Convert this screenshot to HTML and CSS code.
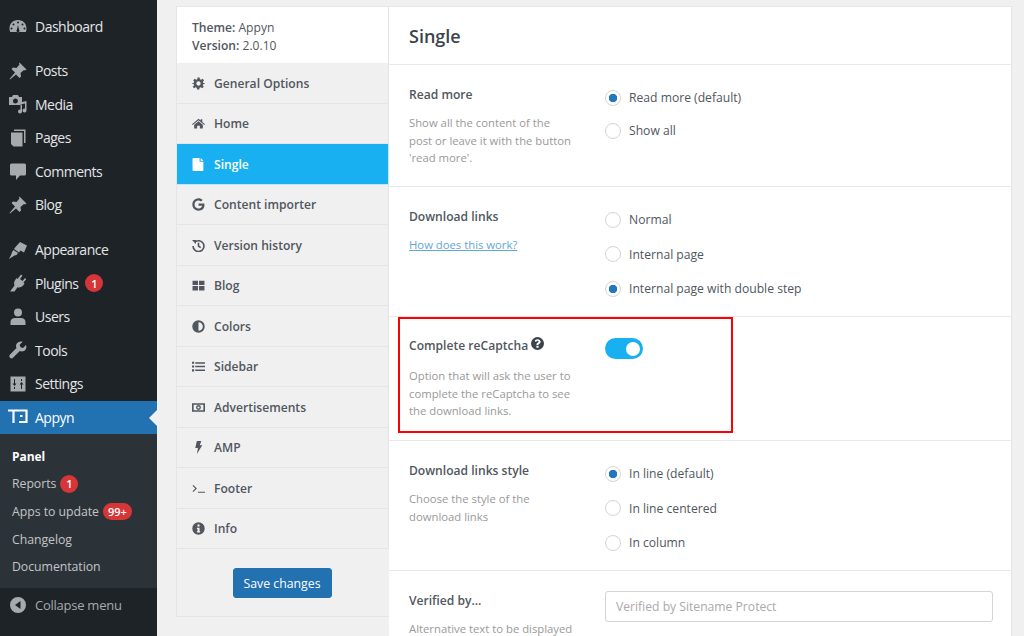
FILE: index.html
```html
<!DOCTYPE html>
<html lang="en">
<head>
<meta charset="utf-8">
<title>Appyn Panel</title>
<link rel="stylesheet" href="styles.css">
</head>
<body>
<div class="page">
<aside class="wp">
  <a class="wi first"><svg class="wic" viewBox="0 0 20 20"><path fill-rule="evenodd" d="M10 3C5 3 1.500 6.500 1.500 11.500c0 1.300.2 2.400.7 3.500h15.600c.5-1.100.7-2.200.7-3.500C18.500 6.500 15 3 10 3zm0 1.500a1 1 0 110 2 1 1 0 010-2zM5.500 6.500a1 1 0 110 2 1 1 0 010-2zm9 0a1 1 0 110 2 1 1 0 010-2zM3.500 10.500a1 1 0 110 2 1 1 0 010-2zm13 0a1 1 0 110 2 1 1 0 010-2zM10 8l1 4.600a1.500 1.500 0 11-2 0z"/></svg>Dashboard</a>
  <a class="wi sep"><svg class="wic" viewBox="0 0 20 20"><path d="M11.500 1.500l7 7-1.500 1-1-.5-3.500 3 .5 3.500-1.500 1.500-3.500-3.500L2 18.500 1.500 18l5.500-6.500L3.500 8 5 6.500l3.500.5 3-3.500-.5-1z"/></svg>Posts</a>
  <a class="wi"><svg class="wic" viewBox="0 0 20 20"><path fill-rule="evenodd" d="M1 3h3l1-2h5l1 2h3v8H1zm6.500 1.500a2.500 2.500 0 100 5 2.500 2.500 0 000-5zM18.500 7v9.500a2 2 0 11-1.500-2V9.500l-3 .8v7.200a2 2 0 11-1.500-2v-5H14V8z"/></svg>Media</a>
  <a class="wi"><svg class="wic" viewBox="0 0 20 20"><path d="M6 1.500h11.500V15H16V3H6zM3 4.500h11.500V18.500H5.500L3 16z"/></svg>Pages</a>
  <a class="wi"><svg class="wic" viewBox="0 0 20 20"><path d="M3.500 2.500h13a1.500 1.500 0 011.500 1.500v9a1.500 1.500 0 01-1.500 1.500H12L8 19v-4.500H3.500A1.500 1.500 0 012 13V4a1.500 1.500 0 011.500-1.500z"/></svg>Comments</a>
  <a class="wi"><svg class="wic" viewBox="0 0 20 20"><path d="M11.500 1.500l7 7-1.500 1-1-.5-3.500 3 .5 3.500-1.500 1.500-3.500-3.500L2 18.500 1.500 18l5.500-6.500L3.500 8 5 6.500l3.500.5 3-3.500-.5-1z"/></svg>Blog</a>
  <a class="wi sep2"><svg class="wic" viewBox="0 0 20 20"><path d="M12 2l7 3.500-3 7-3.500-2-1.500 2-5-3.500 1.500-2zM5.500 10l4.500 3-1.500 2-2 .5-5.500 3.500 2.500-5 .5-2z"/></svg>Appearance</a>
  <a class="wi"><svg class="wic" viewBox="0 0 20 20"><path d="M13 1.500l1.500 1.200L12 6l2.500 2L17 5l1.200 1.300-2.700 3.200 1 1-1 1.500c-1.500 2-3.800 2.800-6 2.200L6.500 18.500H2l4.500-6C5.700 10.700 6 8.500 7.500 6.500l1-1.500 1 1z"/></svg>Plugins<span class="bdg">1</span></a>
  <a class="wi"><svg class="wic" viewBox="0 0 20 20"><path d="M10 1.500a4 4 0 110 8 4 4 0 010-8zM2.500 18v-3c0-2.500 2-4 4.500-4h6c2.500 0 4.500 1.500 4.500 4v3z"/></svg>Users</a>
  <a class="wi"><svg class="wic" viewBox="0 0 20 20"><path d="M18 5l-3 3-2.500-.8L11.700 4.700 14.700 1.800C12.300 1 9.500 2 8.500 4c-.7 1.400-.6 2.900 0 4L1.800 14.800a2.200 2.200 0 003.200 3L11.800 11c1.200.6 2.800.7 4.200 0 2-1.100 3-3.700 2-6z"/></svg>Tools</a>
  <a class="wi"><svg class="wic" viewBox="0 0 20 20"><path fill-rule="evenodd" d="M2.500 2.500h15v15h-15zM6 5v4.500H4.500L6.500 12l2-2.500H7V5zm7 10v-4.500h-1.500L13.500 8l2 2.500H14V15zM6 13v2h1v-2zM13 5v2h1V5z"/></svg>Settings</a>
  <a class="wi cur"><svg class="wic logo" viewBox="0 0 20 20"><path fill="none" stroke="#fff" stroke-width="2.200" d="M0 3.500h11M5.500 3.500V16M11 3.500h7.500v11.500H11M12 9h2.500"/></svg>Appyn</a>
  <div class="wsub">
    <a class="si on">Panel</a>
    <a class="si">Reports<span class="bdg">1</span></a>
    <a class="si">Apps to update<span class="bdg wide">99+</span></a>
    <a class="si">Changelog</a>
    <a class="si">Documentation</a>
  </div>
  <a class="wcol"><svg class="wic" viewBox="0 0 20 20"><path fill-rule="evenodd" d="M10 2a8 8 0 110 16 8 8 0 010-16zm2.500 4L7 10l5.500 4z"/></svg>Collapse menu</a>
</aside>
<main class="panel">
  <nav class="nav">
    <div class="meta"><b>Theme:</b> Appyn<br><b>Version:</b> 2.0.10</div>
    <a class="ni"><svg class="nic" viewBox="0 0 24 24"><path fill-rule="evenodd" d="M10 1h4l.6 3 2.300 1 2.600-1.700 2.800 2.800L20 8.700l1 2.300 3 .6v.8l-3 .6-1 2.300 1.700 2.600-2.800 2.800-2.600-1.700-2.300 1-.6 3h-4l-.6-3-2.300-1-2.600 1.700-2.800-2.800L4 15.300 3 13l-3-.6v-.8l3-.6 1-2.300-1.700-2.600 2.800-2.800L7.700 5 10 4zM12 8a4 4 0 100 8 4 4 0 000-8z"/></svg>General Options</a>
    <a class="ni"><svg class="nic" viewBox="0 0 24 24"><path d="M12 3l4 3.500V4h3v5l5 4.500-1.200 1.300L12 6 1.200 14.800 0 13.500zM12 8l8 6.500V21h-5.500v-5h-5v5H4v-6.500z"/></svg>Home</a>
    <a class="ni act"><svg class="nic" viewBox="0 0 24 24"><path d="M3 0h11v7h7v15a2 2 0 01-2 2H3a2 2 0 01-2-2V2a2 2 0 012-2zm13 0l5 5h-5z"/></svg>Single</a>
    <a class="ni"><svg class="nic" viewBox="0 0 24 24"><path d="M23 13.500C23 20 18.500 23.500 12 23.500a11.500 11.500 0 110-23c3 0 5.700 1.100 7.700 3l-3.200 3.100C12.300 2.500 4.700 5.500 4.700 12c0 7.500 9.500 9.500 13 4.500.5-.7.800-1.500.9-2.300H12v-4h10.700c.2.800.3 1.800.3 3.300z"/></svg>Content importer</a>
    <a class="ni"><svg class="nic" viewBox="0 0 24 24"><path fill="none" stroke="currentColor" stroke-width="3" d="M5 6a10 10 0 11-3 7M12 7v6l4 3"/><path d="M0 2l8 0-1 7z"/></svg>Version history</a>
    <a class="ni"><svg class="nic" viewBox="0 0 24 24"><path d="M1 3h10v8H1zM13 3h10v8H13zM1 13h10v8H1zM13 13h10v8H13z"/></svg>Blog</a>
    <a class="ni"><svg class="nic" viewBox="0 0 24 24"><path fill-rule="evenodd" d="M12 .5a11.500 11.500 0 110 23 11.500 11.500 0 010-23zM12 4v16a8 8 0 000-16z"/></svg>Colors</a>
    <a class="ni"><svg class="nic" viewBox="0 0 24 24"><path d="M0 3h4v4H0zM6 4h18v3H6zM0 10h4v4H0zM6 10.500h18v3H6zM0 17h4v4H0zM6 17.500h18v3H6z"/></svg>Sidebar</a>
    <a class="ni"><svg class="nic" viewBox="0 0 24 24"><path fill-rule="evenodd" d="M0 4h24v16H0zM3 7v10h18V7zM12 7.500a4.500 4.500 0 110 9 4.500 4.500 0 010-9zM12 10a2 2 0 100 4 2 2 0 000-4z"/></svg>Advertisements</a>
    <a class="ni"><svg class="nic" viewBox="0 0 24 24"><path d="M9 0h8l-2.500 8H19L9 24l2-11H6z"/></svg>AMP</a>
    <a class="ni"><svg class="nic" viewBox="0 0 24 24"><path d="M1 7l1.500-1.500L9 12l-6.500 6.500L1 17l5-5zM11 18h13v2H11z"/></svg>Footer</a>
    <a class="ni"><svg class="nic" viewBox="0 0 24 24"><path fill-rule="evenodd" d="M12 .5a11.500 11.500 0 110 23 11.500 11.500 0 010-23zM10 4.500v4h4v-4zM9 10.500v2.500h1.200v4H9v2.500h6V17h-1v-6.500z"/></svg>Info</a>
    <div class="save"><button class="btn" type="button">Save changes</button></div>
  </nav>
  <section class="content">
    <h1 class="ttl">Single</h1>
    <div class="row r1">
      <div class="lab"><h2>Read more</h2><p>Show all the content of the post or leave it with the button 'read more'.</p></div>
      <div class="opts">
        <label class="op"><i class="rad sel"></i>Read more (default)</label>
        <label class="op"><i class="rad"></i>Show all</label>
      </div>
    </div>
    <div class="row r2">
      <div class="lab"><h2>Download links</h2><a class="lnk">How does this work?</a></div>
      <div class="opts">
        <label class="op"><i class="rad"></i>Normal</label>
        <label class="op"><i class="rad"></i>Internal page</label>
        <label class="op"><i class="rad sel"></i>Internal page with double step</label>
      </div>
    </div>
    <div class="row r3">
      <div class="lab"><h2>Complete reCaptcha<svg class="q" viewBox="0 0 24 24"><path fill-rule="evenodd" d="M12 0a12 12 0 110 24 12 12 0 010-24zM10 16.500v3.500h4v-3.500zM12.300 4C9.500 4 7.700 5.300 6.700 7.500l2.700 1.500c.6-1.200 1.300-1.900 2.700-1.900 1 0 1.900.6 1.900 1.500 0 1-.8 1.400-1.800 2-1.200.7-2.200 1.600-2.200 3.400v1h3.800v-.6c0-.9.600-1.200 1.500-1.800 1.300-.8 2.500-1.800 2.500-4C17.800 5.600 15 4 12.300 4z"/></svg></h2><p>Option that will ask the user to complete the reCaptcha to see the download links.</p></div>
      <div class="tog"><span></span></div>
      <div class="mark"></div>
    </div>
    <div class="row r4">
      <div class="lab"><h2>Download links style</h2><p>Choose the style of the download links</p></div>
      <div class="opts">
        <label class="op"><i class="rad sel"></i>In line (default)</label>
        <label class="op"><i class="rad"></i>In line centered</label>
        <label class="op"><i class="rad"></i>In column</label>
      </div>
    </div>
    <div class="row r5">
      <div class="lab"><h2>Verified by...</h2><p>Alternative text to be displayed</p></div>
      <input class="inp" type="text" placeholder="Verified by Sitename Protect">
    </div>
  </section>
</main>
</div>
</body>
</html>
```
FILE: styles.css
```css
* { box-sizing: border-box; }
html, body { margin: 0; height: 636px; overflow: hidden; }
body { background: #f0f0f1; font-family: "Open Sans", sans-serif; }
.page { display: flex; height: 636px; overflow: hidden; }
.wp { width: 157px; flex: none; background: #1d2327; color: #e4e5e6; font-size: 14px; letter-spacing: -.5px; padding-top: 10px; }
.wi { display: flex; align-items: center; height: 33.5px; padding-left: 8px; position: relative; }
.wi.sep { margin-top: 10.4px; }
.wi.sep2 { margin-top: 11.8px; }
.wic { width: 20px; height: 20px; margin-right: 7px; fill: #a7aaad; flex: none; }
.bdg { display: inline-flex; align-items: center; justify-content: center; min-width: 18px; height: 18px; margin-left: 7px; border-radius: 9px; background: #d63638; color: #fff; font-size: 11px; font-weight: 600; letter-spacing: 0; }
.wi.cur { background: #2271b1; color: #fff; }
.wi.cur::after { content: ""; position: absolute; right: 0; top: 9px; border: 8px solid transparent; border-right-color: #f0f0f1; border-left: 0; }
.wsub { background: #2c3338; padding: 8px 0 7px; height: 153.8px; font-size: 12.3px; letter-spacing: -.05px; color: #c3c4c7; }
.si { display: flex; align-items: center; height: 27.7px; padding-left: 12px; }
.si.on { color: #fff; font-weight: 700; font-size: 12px; }
.si .bdg { margin-left: 4px; }
.si .bdg.wide { padding: 0 5px; height: 17px; }
.wcol { display: flex; align-items: center; height: 34px; padding-left: 8px; color: #a7aaad; font-size: 13px; letter-spacing: -.25px; }
.panel { display: flex; align-items: flex-start; margin: 6px 12px 0 19px; flex: 1; min-width: 0; color: #50575e; }
.nav { width: 213px; flex: none; height: 611px; background: #f0f0f1; border: 1px solid #e5e5e5; border-right: 0; display: flex; flex-direction: column; }
.meta { height: 56px; background: #fff; padding: 12px 15px 0; font-size: 12.1px; line-height: 18px; border-right: 1px solid #e5e5e5; }
.meta b { font-weight: 600; }
.ni { display: flex; align-items: center; height: 40.500px; padding: 1px 0 0 15px; font-size: 12.1px; font-weight: 600; border-bottom: 1px solid #e5e5e5; border-right: 1px solid #e5e5e5; }
.ni.act { background: #19b0f2; color: #fff; border-color: #bfe6fa; }
.nic { width: 13px; height: 13px; margin-right: 9px; fill: currentColor; flex: none; }
.save { display: flex; justify-content: center; padding: 19px 2px 0 0; }
.btn { width: 99px; height: 30px; background: #2271b1; color: #fff; border: 1px solid #2271b1; border-radius: 3px; font: 12.3px "Open Sans", sans-serif; padding: 0; }
.content { flex: 1; min-width: 0; height: 640px; background: #fff; border-top: 1px solid #e5e5e5; border-right: 1px solid #e5e5e5; }
.ttl { margin: 0; height: 58px; padding-left: 20px; font-size: 18px; font-weight: 600; color: #3c434a; line-height: 59px; border-bottom: 1px solid #e8e8e8; }
.row { position: relative; display: flex; align-items: flex-start; padding: 21px 20px 0; border-bottom: 1px solid #e8e8e8; }
.r1 { height: 122px; }
.r2 { height: 130px; }
.r3 { height: 124px; }
.r4 { height: 130px; }
.r5 { height: 120px; border-bottom: 0; }
.lab { width: 196px; flex: none; }
.lab h2 { margin: 0; font-size: 12.1px; line-height: 17px; font-weight: 600; color: #50575e; }
.lab p { margin: 11px 0 0; font-size: 11.3px; line-height: 17.500px; color: #999; width: 165px; }
.r3 p { margin-top: 13px; }
.lnk { display: block; margin-top: 11px; font-size: 11.3px; line-height: 17px; color: #5fa8d8; text-decoration: underline; }
.opts { display: flex; flex-direction: column; gap: 17.5px; margin-top: 3px; }
.r1 .opts { gap: 16.400px; }
.op { display: flex; align-items: center; height: 17px; font-size: 12.15px; color: #50575e; }
.rad { width: 16px; height: 16px; margin-right: 8px; border: 1px solid #d4d4d4; border-radius: 50%; background: #fff; flex: none; }
.rad.sel { background: radial-gradient(circle, #2476bd 0 4px, #fff 4.500px); }
.q { width: 13px; height: 13px; margin-left: 3px; vertical-align: 0; fill: #3c434a; }
.r3 h2 { margin-top: -1px; }
.tog { position: relative; width: 38px; height: 21px; background: #19b0f2; border-radius: 10.5px; }
.tog span { position: absolute; right: 3px; top: 3.500px; width: 14px; height: 14px; border-radius: 50%; background: #fff; }
.mark { position: absolute; left: 9px; top: 0; width: 335px; height: 116px; border: 2px solid #f00; }
.inp { width: 388px; flex: none; height: 31px; margin-top: -1px; border: 1px solid #d4d4d4; border-radius: 3px; padding: 0 10px; font: 12.15px "Open Sans", sans-serif; background: #fff; }
.inp::placeholder { color: #aaa; opacity: 1; }
```
